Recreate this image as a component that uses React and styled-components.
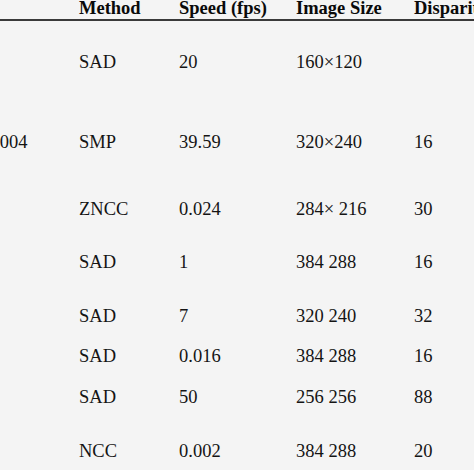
import React from "react";
import styled, { createGlobalStyle } from "styled-components";

const Global = createGlobalStyle`
  html, body { margin: 0; padding: 0; background: #ffffff; }
  body { width: 474px; height: 474px; overflow: hidden; }
`;

const Sheet = styled.div`
  width: 474px;
  height: 470px;
  background: #f4f4f4;
  overflow: hidden;
  font-family: "Liberation Serif", "Times New Roman", serif;
  font-size: 18.5px;
  color: #141414;
  white-space: nowrap;
`;

const cols = "88.5px 100px 117px 118px 60px";

const Head = styled.div`
  display: grid;
  grid-template-columns: ${cols};
  margin-left: -9.5px;
  height: 19px;
  line-height: 16px;
  font-weight: bold;
  color: #0a0a0a;
  border-bottom: 2px solid #3a3a3a;
  width: 492px;
`;

const Body = styled.div`
  padding-top: 31.3px;
`;

const Row = styled.div`
  display: grid;
  grid-template-columns: ${cols};
  margin-left: -9.5px;
  line-height: 20px;
  height: ${(p) => p.$h}px;
`;

const Cell = styled.div`
  overflow: visible;
`;

const rows = [
  { h: 80, c: ["", "SAD", "20", "160×120", ""] },
  { h: 66.7, c: ["2004", "SMP", "39.59", "320×240", "16"] },
  { h: 53.3, c: ["", "ZNCC", "0.024", "284× 216", "30"] },
  { h: 53.7, c: ["", "SAD", "1", "384 288", "16"] },
  { h: 39.7, c: ["", "SAD", "7", "320 240", "32"] },
  { h: 41.6, c: ["", "SAD", "0.016", "384 288", "16"] },
  { h: 53.4, c: ["", "SAD", "50", "256 256", "88"] },
  { h: 20, c: ["", "NCC", "0.002", "384 288", "20"] },
];

export default function App() {
  return (
    <>
      <Global />
      <Sheet>
        <Head>
          <Cell></Cell>
          <Cell>Method</Cell>
          <Cell>Speed (fps)</Cell>
          <Cell>Image Size</Cell>
          <Cell>Disparity</Cell>
        </Head>
        <Body>
          {rows.map((r, i) => (
            <Row key={i} $h={r.h}>
              {r.c.map((t, j) => (
                <Cell key={j}>{t}</Cell>
              ))}
            </Row>
          ))}
        </Body>
      </Sheet>
    </>
  );
}
